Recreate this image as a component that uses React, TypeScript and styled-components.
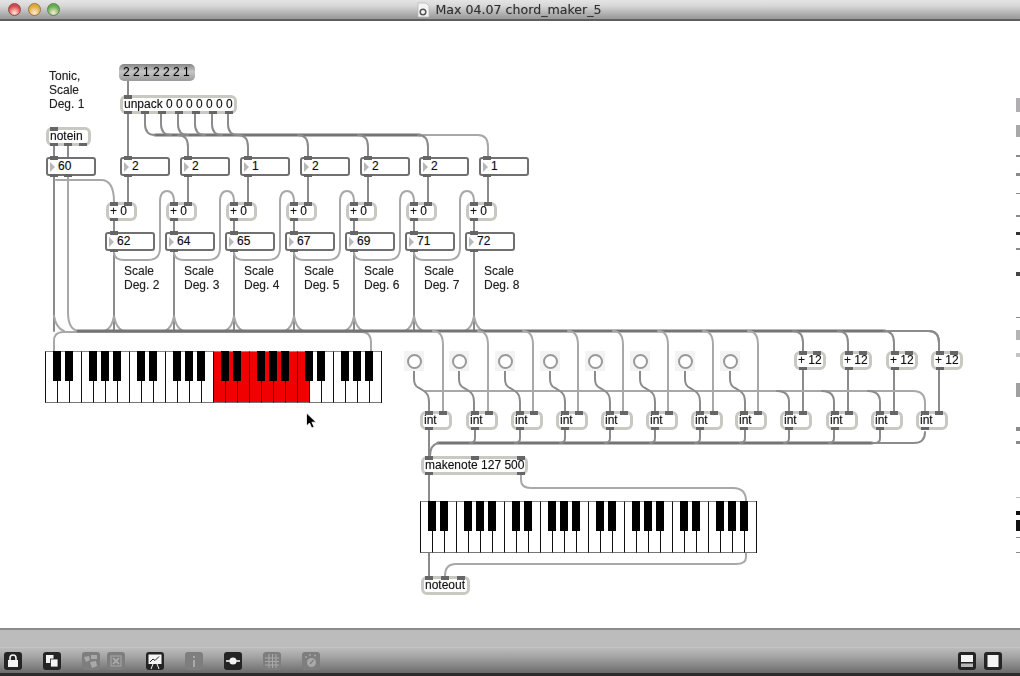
import styled, { createGlobalStyle } from "styled-components";

const CANVAS_TOP = 21;
const step = (start: number, gap: number, count: number) =>
  Array.from({ length: count }, (_, i) => start + gap * i);

const GlobalStyle = createGlobalStyle`
  html, body {
    margin: 0;
    padding: 0;
    background: #fff;
    overflow: hidden;
  }
`;

const Window = styled.div`
  display: flex;
  flex-direction: column;
  width: 1020px;
  height: 676px;
  overflow: hidden;
  filter: blur(0.35px);
  font-family: "Liberation Sans", Arial, sans-serif;
`;

const TitleBar = styled.header`
  position: relative;
  display: flex;
  align-items: center;
  justify-content: center;
  gap: 5px;
  flex: 0 0 21px;
  box-sizing: border-box;
  padding-right: 1px;
  background: linear-gradient(#e4e4e4, #d8d8d8 30%, #9e9e9e 92%);
  border-bottom: 2px solid #5e5e5e;
`;

const Lights = styled.div`
  position: absolute;
  left: 8px;
  top: 3px;
  display: flex;
  gap: 6.5px;
`;

const Light = styled.span<{ $color: string; $edge: string }>`
  width: 13px;
  height: 13px;
  border-radius: 50%;
  box-sizing: border-box;
  border: 1px solid ${(p) => p.$edge};
  background: radial-gradient(circle at 50% 80%, #ffe9d8 0, ${(p) => p.$color} 65%);
`;

const Title = styled.span`
  font-family: "DejaVu Sans", sans-serif;
  font-size: 12.6px;
  color: #303030;
  white-space: nowrap;
  text-shadow: 0 0 1px rgba(0, 0, 0, 0.3);
`;

const Canvas = styled.main`
  position: relative;
  flex: 1;
  background: #fff;
`;

const WireLayer = styled.svg`
  position: absolute;
  left: 0;
  top: 0;
  width: 1020px;
  height: 607px;
`;

const Wire = styled.path<{ $tone?: "heavy" | "light" }>`
  fill: none;
  stroke-linecap: round;
  stroke: ${(p) =>
    p.$tone === "heavy" ? "#747474" : p.$tone === "light" ? "#a8a8a8" : "#8b8b8b"};
  stroke-width: ${(p) =>
    p.$tone === "heavy" ? 3 : 2};
`;

const Node = styled.div<{ $x: number; $y: number; $w: number; $h?: number }>`
  position: absolute;
  left: ${(p) => p.$x}px;
  top: ${(p) => p.$y - CANVAS_TOP}px;
  width: ${(p) => p.$w}px;
  height: ${(p) => p.$h ?? 19}px;
  box-sizing: border-box;
  font-size: 12px;
  line-height: 15px;
  color: #111;
  white-space: nowrap;
  text-shadow: 0 0 1px rgba(0, 0, 0, 0.35);
`;

const ObjectBox = styled(Node)`
  padding-left: 1px;
  background: #fff;
  border: 3px solid #c9c9c3;
  border-radius: 6px;
  line-height: 13px;
`;

const MessageBox = styled(Node)`
  padding: 1px 0 0 4px;
  background: linear-gradient(#868686, #c6c6c6 45%, #9a9a9a);
  border-radius: 5px;
  color: #000;
`;

const NumberBox = styled(Node)`
  display: flex;
  align-items: center;
  gap: 3px;
  padding-left: 2px;
  background: #fff;
  border: 2px solid #707070;
  border-radius: 3px;
`;

const Arrow = styled.span`
  width: 0;
  height: 0;
  border-left: 5px solid #b8b8b8;
  border-top: 5px solid transparent;
  border-bottom: 5px solid transparent;
`;

const Port = styled.i<{ $at: number; $side: "top" | "bottom" }>`
  position: absolute;
  left: ${(p) => p.$at}px;
  ${(p) => p.$side}: -3px;
  width: 8px;
  height: 3.5px;
  background: #666;
`;

const BangCell = styled(Node)`
  display: flex;
  align-items: center;
  justify-content: center;
  background: #f3f3f3;
`;

const BangRing = styled.span`
  width: 15px;
  height: 15px;
  box-sizing: border-box;
  border: 2px solid #999;
  border-radius: 50%;
  background: #fff;
`;

const Comment = styled(Node)`
  line-height: 14px;
  color: #222;
  white-space: pre;
`;

const KeyboardFrame = styled(Node)`
  display: flex;
  border-right: 1px solid #111;
`;

const WhiteKey = styled.span<{ $on: boolean }>`
  flex: 0 0 12px;
  box-sizing: border-box;
  background: ${(p) => (p.$on ? "#f00000" : "#fff")};
  border-left: 1px solid #111;
  border-top: 1px solid #888;
  border-bottom: 1px solid #777;
`;

const BlackKey = styled.span<{ $index: number }>`
  position: absolute;
  left: ${(p) => p.$index * 12 - 4}px;
  top: 0;
  width: 8px;
  height: 30px;
  background: #000;
`;

const Pointer = styled.svg`
  position: absolute;
  left: 304px;
  top: ${411 - CANVAS_TOP}px;
  width: 14px;
  height: 20px;
`;

const Toolbar = styled.footer`
  flex: 0 0 48px;
  display: flex;
  flex-direction: column;
  box-sizing: border-box;
  border-top: 2px solid #8c8c8c;
  border-bottom: 3px solid #2c2c2c;
  background: #bcbcbc;
`;

const ToolbarBand = styled.div`
  flex: 0 0 17px;
  border-bottom: 1px solid #c4c4c4;
`;

const ToolRow = styled.div`
  flex: 1;
  display: flex;
  align-items: center;
  padding: 0 18px 0 4px;
  background: linear-gradient(#bcbcbc, #a4a4a4 35%, #6c6c6c);
`;

const ToolGroup = styled.div<{ $gap: number; $push?: boolean }>`
  display: flex;
  gap: ${(p) => p.$gap}px;
  margin-left: ${(p) => (p.$push ? "auto" : "0")};
`;

const Tool = styled.div<{ $muted?: boolean }>`
  width: 18px;
  height: 18px;
  border-radius: 3px;
  background: ${(p) => (p.$muted ? "#7e7e7e" : "#242424")};
  color: ${(p) => (p.$muted ? "#a9a9a9" : "#f4f4f4")};
  svg {
    display: block;
    width: 18px;
    height: 18px;
  }
`;

const Ports = ({ top = [], bottom = [] }: { top?: number[]; bottom?: number[] }) => (
  <>
    {top.map((at) => (
      <Port key={`t${at}`} $at={at} $side="top" />
    ))}
    {bottom.map((at) => (
      <Port key={`b${at}`} $at={at} $side="bottom" />
    ))}
  </>
);

const Num = ({ x, y, value, top, bottom }: { x: number; y: number; value: string; top: number[]; bottom: number[] }) => (
  <NumberBox $x={x} $y={y} $w={50}>
    <Arrow />
    {value}
    <Ports top={top} bottom={bottom} />
  </NumberBox>
);

const Keyboard = ({ x, y, active = [] }: { x: number; y: number; active?: number[] }) => (
  <KeyboardFrame $x={x} $y={y} $w={337} $h={52}>
    {step(0, 1, 28).map((k) => (
      <WhiteKey key={k} $on={active.includes(k)} />
    ))}
    {step(1, 1, 27)
      .filter((k) => k % 7 !== 0 && k % 7 !== 3)
      .map((k) => (
        <BlackKey key={k} $index={k} />
      ))}
  </KeyboardFrame>
);

const Wires = () => {
  const columns = step(114, 60, 7);
  const intFirst = [429, 475, 520, 565, 610, 655, 700, 745, 789, 834, 880, 925];
  const intSecond = [443, 488, 533, 578, 623, 668, 713, 758];
  const plusTwelve = [803, 848, 894, 939];
  const bangs = [414, 459, 505, 550, 595, 640, 685, 730];

  return (
    <WireLayer viewBox={`0 ${CANVAS_TOP} 1020 607`}>
      <Wire d="M128 81V95M128 113V157M128 175V202" />
      <Wire $tone="heavy" d="M155 135H420" />
      <Wire $tone="light" d="M420 135H478Q488 135 488 147V157" />
      {[145, 161, 178, 195, 212, 228].map((x) => (
        <Wire key={x} d={`M${x} 113V124Q${x} 135 ${x + 10} 135`} />
      ))}
      {step(188, 60, 5).map((x) => (
        <Wire key={x} d={`M${x - 10} 135Q${x} 135 ${x} 147V157M${x} 175V202`} />
      ))}
      <Wire d="M488 175V202" />

      <Wire d="M54 145V157M54 175V331M68 145V157" />
      <Wire $tone="light" d="M68 175V312Q68 331 80 331" />
      <Wire $tone="light" d="M56 180H101Q114 180 114 202" />
      <Wire $tone="light" d="M54 351V341Q54 332 63 332H362Q371 332 371 343V351" />
      <Wire $tone="light" d="M54 316Q56 328 64 331" />

      {columns.map((x) => (
        <g key={x}>
          <Wire d={`M${x} 220V232M${x} 250V331`} />
          <Wire $tone="light" d={`M${x - 9} 331Q${x - 2} 328 ${x} 316Q${x + 2} 328 ${x + 9} 331`} />
        </g>
      ))}
      {columns.slice(0, 6).map((x) => (
        <Wire
          key={x}
          $tone="light"
          d={`M${x} 252Q${x} 260 ${x + 10} 260H${x + 34}Q${x + 46} 260 ${x + 46} 248V202Q${x + 46} 191 ${x + 53} 191Q${x + 60} 191 ${x + 60} 202`}
        />
      ))}

      <Wire $tone="heavy" d="M78 331H885" />
      <Wire d="M885 331H928Q939 331 939 343V351" />
      {intSecond.map((x) => (
        <Wire key={x} $tone="light" d={`M${x - 10} 331Q${x} 331 ${x} 345V411`} />
      ))}
      {plusTwelve.map((x) => (
        <Wire key={x} d={`M${x - 10} 331Q${x} 331 ${x} 343V351M${x} 370V411`} />
      ))}

      <Wire $tone="light" d="M425 391H913Q925 391 925 403V411" />
      {bangs.map((x) => (
        <Wire key={x} d={`M${x} 368V379Q${x} 386 ${x + 5} 388L${x + 10} 391Q${x + 15} 394 ${x + 15} 402V411`} />
      ))}
      {[789, 834, 880].map((x) => (
        <Wire key={x} d={`M${x - 12} 391Q${x} 391 ${x} 402V411`} />
      ))}

      <Wire $tone="heavy" d="M438 443H872" />
      <Wire d="M872 443H914Q925 443 925 432" />
      {intFirst.slice(1, 11).map((x) => (
        <Wire key={x} d={`M${x} 430V438Q${x} 443 ${x - 5} 443`} />
      ))}
      <Wire d="M429 430V456M438 443Q430 445 430 456" />
      <Wire d="M429 475V501M429 553V576" />
      <Wire $tone="light" d="M521 475V480Q521 488 531 488H733Q746 488 746 501" />
      <Wire $tone="light" d="M746 553V557Q746 564 736 564H456Q445 564 445 576" />

      {/* objects cut off by the window's right edge */}
      <g fill="#8a8a8a">
        <rect x="1016" y="98" width="4" height="14" fill="#b0aeb0" />
        <rect x="1016" y="125" width="4" height="12" fill="#a8a8a8" />
        <rect x="1016" y="155" width="4" height="2" />
        <rect x="1016" y="173" width="4" height="3" />
        <rect x="1016" y="193" width="4" height="1" />
        <rect x="1016" y="215" width="4" height="2" />
        <rect x="1016" y="232" width="4" height="3" fill="#333" />
        <rect x="1016" y="248" width="4" height="2" />
        <rect x="1016" y="272" width="4" height="4" fill="#444" />
        <rect x="1016" y="317" width="4" height="1" />
        <rect x="1016" y="330" width="4" height="10" fill="#b4b4b4" />
        <rect x="1016" y="353" width="4" height="4" fill="#c4c4c4" />
        <rect x="1016" y="383" width="4" height="14" fill="#a0a0a0" />
        <rect x="1016" y="427" width="4" height="4" />
        <rect x="1016" y="441" width="4" height="3" />
        <rect x="1016" y="497" width="4" height="1" fill="#bbb" />
        <rect x="1016" y="511" width="4" height="4" fill="#111" />
        <rect x="1016" y="520" width="4" height="11" fill="#111" />
        <rect x="1016" y="537" width="4" height="1" />
        <rect x="1016" y="552" width="4" height="1" />
      </g>
    </WireLayer>
  );
};

export default function App() {
  const sources = [
    { x: 120, value: "2" },
    { x: 180, value: "2" },
    { x: 240, value: "1" },
    { x: 300, value: "2" },
    { x: 360, value: "2" },
    { x: 419, value: "2" },
    { x: 479, value: "1" },
  ];
  const results = ["62", "64", "65", "67", "69", "71", "72"];
  const intBoxes = [420, 466, 511, 556, 601, 646, 691, 735, 780, 826, 871, 916];
  const bangs = [414, 459, 505, 550, 595, 640, 685, 730];
  const plusBoxes = [794, 840, 886, 931];

  return (
    <>
      <GlobalStyle />
      <Window>
        <TitleBar>
          <Lights>
            <Light $color="#d8474c" $edge="#8f4a4c" />
            <Light $color="#e0a935" $edge="#94783f" />
            <Light $color="#62ad4c" $edge="#5d8250" />
          </Lights>
          <svg width="13" height="16" viewBox="0 0 13 16">
            <path d="M1 1h8l3 3v11H1z" fill="#f4f4f4" stroke="#b5b5b5" strokeWidth="0.7" />
            <circle cx="6" cy="10" r="2.8" fill="none" stroke="#555" strokeWidth="1.5" />
          </svg>
          <Title>Max 04.07 chord_maker_5</Title>
        </TitleBar>

        <Canvas>
          <Wires />

          <Comment $x={49} $y={69} $w={50} $h={44}>{"Tonic,\nScale\nDeg. 1"}</Comment>

          <MessageBox $x={119} $y={64} $w={76} $h={17}>2 2 1 2 2 2 1</MessageBox>
          <ObjectBox $x={120} $y={95} $w={117}>
            unpack 0 0 0 0 0 0 0
            <Ports top={[1]} bottom={[1, 18, 35, 52, 69, 86, 102]} />
          </ObjectBox>
          <ObjectBox $x={46} $y={127} $w={45}>
            notein
            <Ports top={[1]} bottom={[1, 15, 30]} />
          </ObjectBox>

          <Num x={46} y={157} value="60" top={[2]} bottom={[2, 16]} />
          {sources.map((s) => (
            <Num key={s.x} x={s.x} y={157} value={s.value} top={[2]} bottom={[2]} />
          ))}

          {step(106, 60, 7).map((x) => (
            <ObjectBox key={x} $x={x} $y={202} $w={31}>
              {"+ 0"}
              <Ports top={[1, 15]} bottom={[1]} />
            </ObjectBox>
          ))}

          {results.map((value, i) => (
            <Num key={value} x={105 + i * 60} y={232} value={value} top={[3]} bottom={[3]} />
          ))}

          {step(124, 60, 7).map((x, i) => (
            <Comment key={x} $x={x} $y={264} $w={50} $h={30}>{`Scale\nDeg. ${i + 2}`}</Comment>
          ))}

          <Keyboard x={45} y={351} active={step(14, 1, 8)} />

          {bangs.map((x) => (
            <BangCell key={x} $x={x - 10} $y={351} $w={20} $h={20}>
              <BangRing />
            </BangCell>
          ))}

          {plusBoxes.map((x) => (
            <ObjectBox key={x} $x={x} $y={351} $w={32}>
              + 12
              <Ports top={[2, 16]} bottom={[2]} />
            </ObjectBox>
          ))}

          {intBoxes.map((x) => (
            <ObjectBox key={x} $x={x} $y={411} $w={32}>
              int
              <Ports top={[2, 16]} bottom={[2]} />
            </ObjectBox>
          ))}

          <ObjectBox $x={421} $y={456} $w={107}>
            makenote 127 500
            <Ports top={[1, 47, 93]} bottom={[1, 93]} />
          </ObjectBox>

          <Keyboard x={420} y={501} />

          <ObjectBox $x={421} $y={576} $w={49}>
            noteout
            <Ports top={[1, 17, 33]} />
          </ObjectBox>

          <Pointer viewBox="0 0 14 20">
            <path d="M2.5 2v13l3-3 2.2 5 2.4-1-2.2-4.8h4.2z" fill="#000" stroke="#fff" strokeWidth="0.8" />
          </Pointer>
        </Canvas>

        <Toolbar>
          <ToolbarBand />
          <ToolRow>
            <ToolGroup $gap={21}>
              <Tool>
                <svg viewBox="0 0 18 18">
                  <path d="M6 8V6a3 3 0 0 1 6 0v2" fill="none" stroke="currentColor" strokeWidth="1.6" />
                  <rect x="4" y="8" width="10" height="7" fill="currentColor" />
                </svg>
              </Tool>
              <Tool>
                <svg viewBox="0 0 18 18">
                  <rect x="3" y="3" width="7.5" height="8" fill="currentColor" />
                  <rect x="7.5" y="7" width="7.5" height="8" fill="currentColor" stroke="#242424" strokeWidth="0.8" />
                </svg>
              </Tool>
              <ToolGroup $gap={7}>
                <Tool $muted>
                  <svg viewBox="0 0 18 18">
                    <path d="M2 5l5-1 1 4-4 2zM9 3h6v4H9zM8 10l6-1 1 5-5 2z" fill="currentColor" />
                  </svg>
                </Tool>
                <Tool $muted>
                  <svg viewBox="0 0 18 18">
                    <rect x="4" y="4" width="10" height="10" fill="none" stroke="currentColor" strokeWidth="1" />
                    <path d="M6 6l6 6M12 6l-6 6" stroke="currentColor" strokeWidth="1.8" />
                  </svg>
                </Tool>
              </ToolGroup>
              <Tool>
                <svg viewBox="0 0 18 18">
                  <rect x="2.5" y="2.5" width="13" height="9.5" fill="currentColor" />
                  <path d="M4 10l3-3 2 1.5 4-4" fill="none" stroke="#242424" strokeWidth="1" />
                  <path d="M7 12l-2 5M11 12l2 5" stroke="currentColor" strokeWidth="1" />
                </svg>
              </Tool>
              <Tool $muted>
                <svg viewBox="0 0 18 18">
                  <rect x="8" y="4" width="2" height="2" fill="currentColor" />
                  <rect x="8" y="8" width="2" height="7" fill="currentColor" />
                </svg>
              </Tool>
              <Tool>
                <svg viewBox="0 0 18 18">
                  <path d="M2 9h14" stroke="currentColor" strokeWidth="1.6" />
                  <circle cx="9" cy="9" r="3.6" fill="currentColor" />
                </svg>
              </Tool>
              <Tool $muted>
                <svg viewBox="0 0 18 18">
                  <path d="M6 2v14M9.5 2v14M13 2v14M2 6h14M2 9.5h14M2 13h14" stroke="currentColor" strokeWidth="1" />
                </svg>
              </Tool>
              <Tool $muted>
                <svg viewBox="0 0 18 18">
                  <circle cx="9.5" cy="10.5" r="4.5" fill="currentColor" />
                  <path d="M8 12l3.5-4" stroke="#7e7e7e" strokeWidth="1.2" />
                  <circle cx="4" cy="5" r="1" fill="currentColor" />
                  <circle cx="8" cy="3" r="1" fill="currentColor" />
                  <circle cx="13" cy="3.5" r="1" fill="currentColor" />
                </svg>
              </Tool>
            </ToolGroup>
            <ToolGroup $gap={8} $push>
              <Tool>
                <svg viewBox="0 0 18 18">
                  <rect x="3" y="3" width="12" height="7" fill="currentColor" />
                  <rect x="3" y="11.5" width="12" height="3.5" fill="#b8b8b8" />
                </svg>
              </Tool>
              <Tool>
                <svg viewBox="0 0 18 18">
                  <rect x="3.5" y="3" width="11" height="12" fill="currentColor" />
                </svg>
              </Tool>
            </ToolGroup>
          </ToolRow>
        </Toolbar>
      </Window>
    </>
  );
}
